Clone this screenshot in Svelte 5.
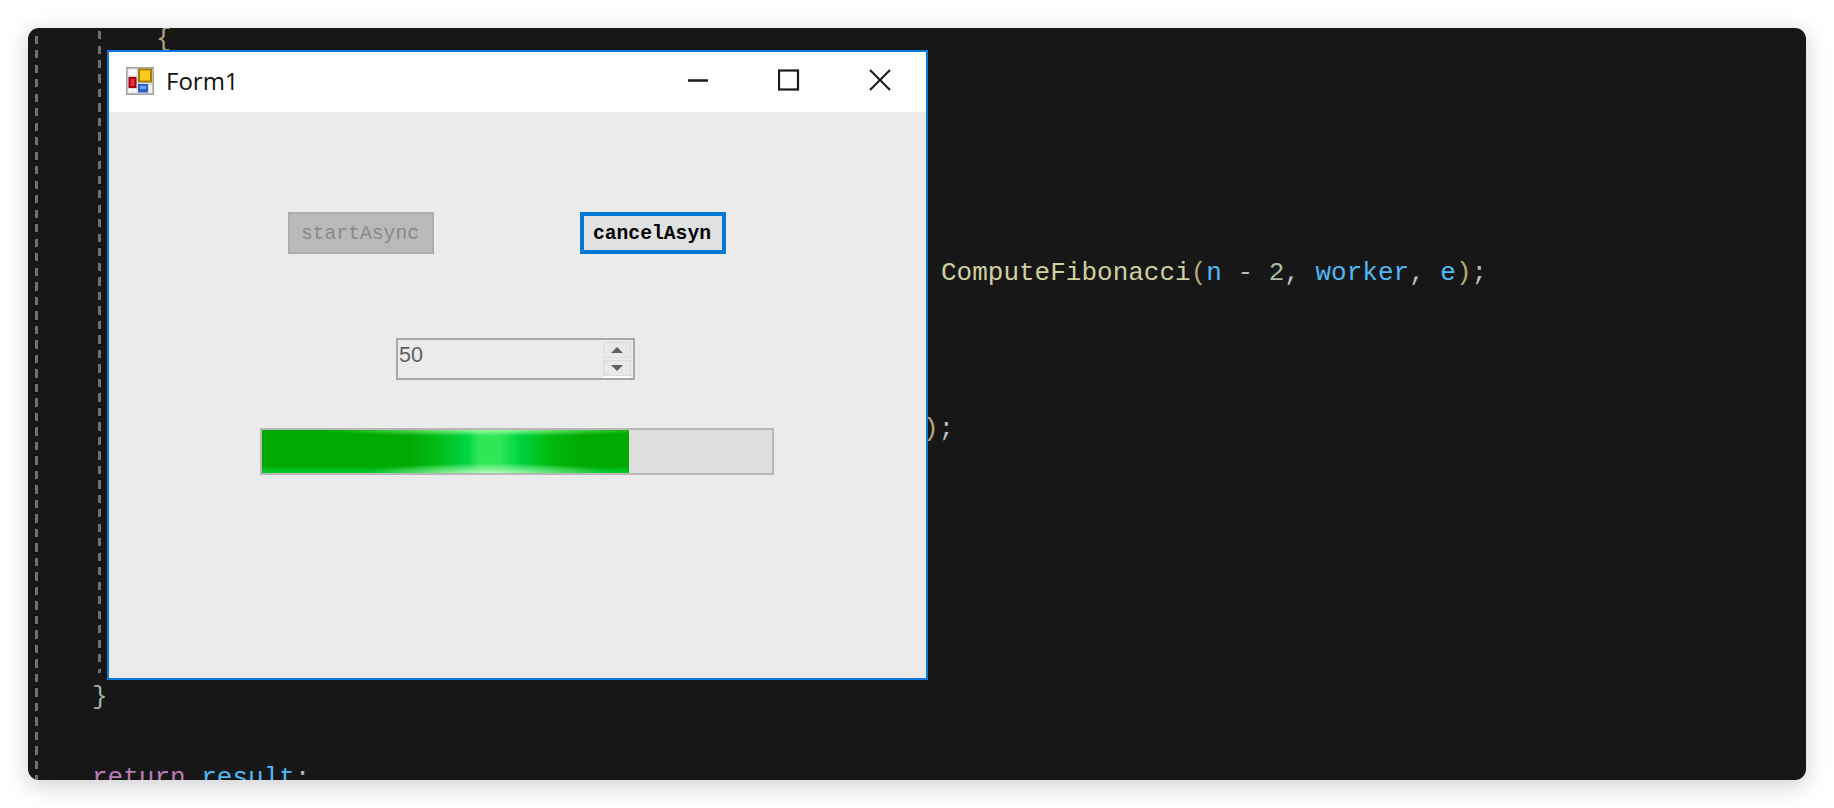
<script lang="ts">
	type Token = [string, string];

	// visible parts of the editor, one entry per line; blank lines sit behind the form
	const lines: { indent: number; tokens: Token[] }[] = [
		{ indent: 64, tokens: [['brace', '{']] },
		{ indent: 0, tokens: [] },
		{ indent: 0, tokens: [] },
		{ indent: 0, tokens: [] },
		{ indent: 0, tokens: [] },
		{ indent: 0, tokens: [] },
		{
			indent: 849,
			tokens: [
				['fn', 'ComputeFibonacci'],
				['paren', '('],
				['var', 'n'],
				['plain', ' - '],
				['num', '2'],
				['plain', ', '],
				['var', 'worker'],
				['plain', ', '],
				['var', 'e'],
				['paren', ')'],
				['plain', ';']
			]
		},
		{ indent: 0, tokens: [] },
		{ indent: 0, tokens: [] },
		{ indent: 0, tokens: [] },
		{
			indent: 831,
			tokens: [
				['paren', ')'],
				['plain', ';']
			]
		},
		{ indent: 0, tokens: [] },
		{ indent: 0, tokens: [] },
		{ indent: 0, tokens: [] },
		{ indent: 0, tokens: [] },
		{ indent: 0, tokens: [] },
		{ indent: 0, tokens: [] },
		{ indent: 0, tokens: [['brace raised', '}']] },
		{ indent: 0, tokens: [] },
		{
			indent: 0,
			tokens: [
				['kw', 'return'],
				['plain', ' '],
				['var', 'result'],
				['plain', ';']
			]
		}
	];

	let value = 50;
	let progress = 72;
</script>

<div class="page">
	<div class="editor">
		<span class="guide guide-outer"></span>
		<span class="guide guide-inner"></span>

		<div class="code">
			{#each lines as line}
				<div class="line" style={`padding-left: ${line.indent}px`}>{#each line.tokens as [kind, text]}<span class={kind}>{text}</span>{/each}</div>
			{/each}
		</div>

		<div class="form">
			<div class="titlebar">
				<svg class="app-icon" viewBox="0 0 28 28" width="28" height="28">
					<rect x="0.75" y="0.75" width="26.5" height="26.5" fill="#dcdcdc" stroke="#a5a5a5" stroke-width="1.5" />
					<rect x="2.5" y="2.5" width="8" height="6" fill="#fff" />
					<rect x="2.5" y="22" width="3.5" height="3.5" fill="#fff" />
					<rect x="7" y="22" width="3.5" height="3.5" fill="#fff" />
					<rect x="23" y="18" width="2.5" height="7.5" fill="#fff" />
					<rect x="12" y="1.5" width="14" height="14" fill="#a87a00" />
					<rect x="14" y="3.5" width="10" height="10" fill="#ffc81e" />
					<rect x="2.5" y="10" width="8" height="11" fill="#a80010" />
					<rect x="4.5" y="12" width="4" height="7" fill="#e8303a" />
					<rect x="12" y="17" width="10" height="8.5" fill="#2c62c8" />
					<rect x="14" y="19" width="6" height="3" fill="#6ea4f4" />
				</svg>
				<span class="title">Form1</span>

				<div class="controls">
					<span class="control">
						<svg viewBox="0 0 22 22" width="22" height="22"><path d="M1 11.5h20" stroke="#1a1a1a" stroke-width="2.4" fill="none" /></svg>
					</span>
					<span class="control">
						<svg viewBox="0 0 22 22" width="22" height="22"><rect x="1" y="1.5" width="19" height="19" stroke="#1a1a1a" stroke-width="2.2" fill="none" /></svg>
					</span>
					<span class="control">
						<svg viewBox="0 0 22 22" width="22" height="22"><path d="M1 1l20 20M21 1L1 21" stroke="#1a1a1a" stroke-width="2" fill="none" /></svg>
					</span>
				</div>
			</div>

			<div class="client">
				<div class="buttons">
					<button class="btn" disabled>startAsync</button>
					<button class="btn focused">cancelAsyn</button>
				</div>

				<div class="numeric">
					<span class="numeric-value">{value}</span>
					<div class="spinner">
						<span class="spin"><i class="arrow up"></i></span>
						<span class="spin"><i class="arrow down"></i></span>
					</div>
				</div>

				<div class="progress">
					<div class="progress-fill" style={`width: ${progress}%`}></div>
				</div>
			</div>
		</div>
	</div>
</div>

<style>
	:global(body) {
		background: #fff;
	}

	.page {
		padding: 28px;
		height: 752px;
	}

	.editor {
		position: relative;
		height: 752px;
		overflow: hidden;
		background: #171717;
		border-radius: 11px;
		box-shadow: 0 5px 24px rgba(0, 0, 0, 0.2);
	}

	.guide {
		position: absolute;
		width: 3px;
		background: repeating-linear-gradient(180deg, #707070 0 8px, transparent 8px 14.5px);
	}

	.guide-outer {
		left: 7px;
		top: 8px;
		bottom: 0;
	}

	.guide-inner {
		left: 70px;
		top: 3px;
		height: 642px;
	}

	.code {
		margin: -8px 0 0 64px;
		font-family: 'Liberation Mono', monospace;
		font-size: 26px;
		line-height: 39px;
		white-space: pre;
		color: #bdbdbd;
	}

	.line {
		height: 39px;
	}

	.line:last-child {
		margin-top: -2px;
	}

	.brace {
		color: #b3a67e;
	}

	.raised {
		display: inline-block;
		transform: translateY(-5px);
		color: #9fb4a8;
	}

	.fn {
		color: #cfcf9f;
	}

	.paren {
		color: #b9a678;
	}

	.var {
		color: #4fb8f5;
	}

	.num {
		color: #a5bd98;
	}

	.kw {
		color: #b87cb4;
	}

	.form {
		position: absolute;
		left: 79px;
		top: 22px;
		box-sizing: border-box;
		width: 821px;
		height: 630px;
		border: 2px solid #0a7ae0;
		background: #ebebeb;
	}

	.titlebar {
		display: flex;
		align-items: center;
		height: 60px;
		padding-left: 17px;
		background: #fff;
	}

	.app-icon {
		margin-top: -2px;
	}

	.title {
		margin: -4px 0 0 12px;
		font-family: 'Open Sans', sans-serif;
		font-size: 24px;
		color: #111;
	}

	.controls {
		display: flex;
		margin: -4px 1px 0 auto;
	}

	.control {
		display: flex;
		align-items: center;
		justify-content: center;
		width: 91px;
		height: 60px;
	}

	.client {
		padding: 100px 0 0 151px;
	}

	.buttons {
		display: flex;
		gap: 146px;
		padding-left: 28px;
	}

	.btn {
		box-sizing: border-box;
		width: 146px;
		height: 42px;
		padding: 2px 2px 0 0;
		border: 2px solid #adadad;
		border-radius: 0;
		background: #b9b9b9;
		font-family: 'Liberation Mono', monospace;
		font-size: 19.7px;
		color: #8a8a8a;
	}

	.btn.focused {
		border: 4px solid #0078d7;
		background: #e1e1e1;
		font-weight: 700;
		color: #000;
	}

	.numeric {
		display: flex;
		box-sizing: border-box;
		width: 239px;
		height: 42px;
		margin: 84px 0 0 136px;
		border: 2px solid #a5a8b0;
	}

	.numeric-value {
		padding: 3px 0 0 1px;
		font-family: 'Liberation Sans', sans-serif;
		font-size: 21.5px;
		line-height: 24px;
		color: #5f5f5f;
	}

	.spinner {
		display: flex;
		flex-direction: column;
		gap: 2px;
		width: 28px;
		height: 34px;
		margin: 2px 2px 0 auto;
		border-bottom: 2px solid #fff;
	}

	.spin {
		display: flex;
		flex: 1;
		align-items: center;
		justify-content: center;
		background: #e9e9e9;
		box-shadow: inset 0 0 0 1px #dcdcdc;
	}

	.arrow {
		width: 0;
		height: 0;
		border-left: 6px solid transparent;
		border-right: 6px solid transparent;
	}

	.arrow.up {
		border-bottom: 6px solid #606060;
	}

	.arrow.down {
		border-top: 6px solid #606060;
	}

	.progress {
		box-sizing: border-box;
		width: 514px;
		height: 47px;
		margin-top: 48px;
		border: 2px solid #b8b8b8;
		background: #dedede;
	}

	.progress-fill {
		height: 100%;
		background:
			radial-gradient(ellipse 46% 6px at 62% 0, rgba(170, 255, 170, 0.85), rgba(120, 240, 120, 0) 100%),
			radial-gradient(ellipse 34% 10px at 62% 100%, rgba(190, 255, 190, 0.95), rgba(120, 240, 120, 0) 100%),
			linear-gradient(0deg, rgba(0, 215, 70, 0.7), rgba(0, 215, 70, 0) 7px),
			linear-gradient(90deg, #00aa00 0 40%, #00be18 48%, #00d543 56%, #2ee656 59%, #2ee656 65%, #00d543 70%, #00b80c 79%, #00aa00 88%);
	}
</style>
